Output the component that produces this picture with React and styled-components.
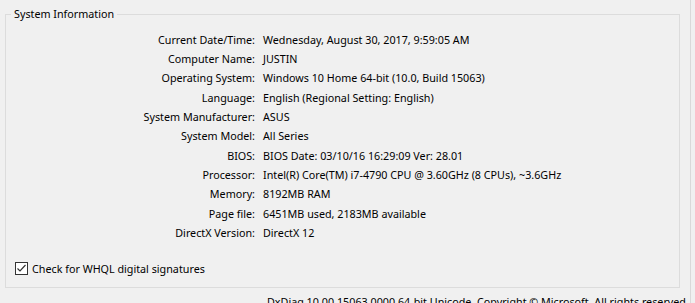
import React from "react";
import styled, { createGlobalStyle } from "styled-components";

const Global = createGlobalStyle`
  html, body { margin: 0; padding: 0; background: #f0f0f0; }
  body { width: 695px; height: 303px; overflow: hidden; font-family: "Noto Sans", "Open Sans", sans-serif; font-size: 10.75px; color: #000; }
`;

const Window = styled.div`
  position: relative;
  width: 695px;
  height: 303px;
  background: #f0f0f0;
  display: flex;
  flex-direction: column;
  padding: 14px 0 0 5px;
  box-sizing: border-box;
  overflow: hidden;
`;

const EdgeLine = styled.div`
  position: absolute;
  top: 0;
  bottom: 0;
  left: 690px;
  width: 1px;
  background: #d9d9d9;
`;

const Group = styled.fieldset`
  margin: 0;
  width: 675px;
  height: 274px;
  flex-shrink: 0;
  box-sizing: border-box;
  border: 1px solid #dcdcdc;
  padding: 0;
  position: relative;
  display: flex;
  flex-direction: column;
`;

const Legend = styled.div`
  position: absolute;
  top: -8px;
  left: 5px;
  padding: 0 3px;
  background: #f0f0f0;
  line-height: 15px;
  white-space: nowrap;
`;

const Grid = styled.div`
  display: grid;
  grid-template-columns: 249px auto;
  column-gap: 8px;
  grid-auto-rows: 19.35px;
  margin-top: 15px;
  align-items: center;
`;

const Label = styled.div`
  text-align: right;
  white-space: nowrap;
`;

const Value = styled.div`
  white-space: nowrap;
`;

const CheckRow = styled.label`
  display: flex;
  align-items: center;
  margin: 19px 0 0 9px;
  gap: 4px;
`;

const Box = styled.span`
  width: 13px;
  height: 13px;
  box-sizing: border-box;
  border: 1px solid #333;
  background: #fff;
  display: flex;
  align-items: center;
  justify-content: center;
`;

const Footer = styled.div`
  margin: 7px 0 0 262px;
  flex-shrink: 0;
  white-space: nowrap;
  line-height: 15px;
`;

const rows = [
  ["Current Date/Time:", "Wednesday, August 30, 2017, 9:59:05 AM"],
  ["Computer Name:", "JUSTIN"],
  ["Operating System:", "Windows 10 Home 64-bit (10.0, Build 15063)"],
  ["Language:", "English (Regional Setting: English)"],
  ["System Manufacturer:", "ASUS"],
  ["System Model:", "All Series"],
  ["BIOS:", "BIOS Date: 03/10/16 16:29:09 Ver: 28.01"],
  ["Processor:", "Intel(R) Core(TM) i7-4790 CPU @ 3.60GHz (8 CPUs), ~3.6GHz"],
  ["Memory:", "8192MB RAM"],
  ["Page file:", "6451MB used, 2183MB available"],
  ["DirectX Version:", "DirectX 12"],
];

export default function App() {
  return (
    <>
      <Global />
      <Window>
        <EdgeLine />
        <Group>
          <Legend>System Information</Legend>
          <Grid>
            {rows.map(([l, v]) => (
              <React.Fragment key={l}>
                <Label>{l}</Label>
                <Value>{v}</Value>
              </React.Fragment>
            ))}
          </Grid>
          <CheckRow>
            <Box>
              <svg width="11" height="11" viewBox="0 0 11 11">
                <path d="M1.5 5.5 L4 8 L9.5 2" fill="none" stroke="#333" strokeWidth="1.2" />
              </svg>
            </Box>
            Check for WHQL digital signatures
          </CheckRow>
        </Group>
        <Footer>DxDiag 10.00.15063.0000 64-bit Unicode&nbsp; Copyright © Microsoft. All rights reserved.</Footer>
      </Window>
    </>
  );
}
